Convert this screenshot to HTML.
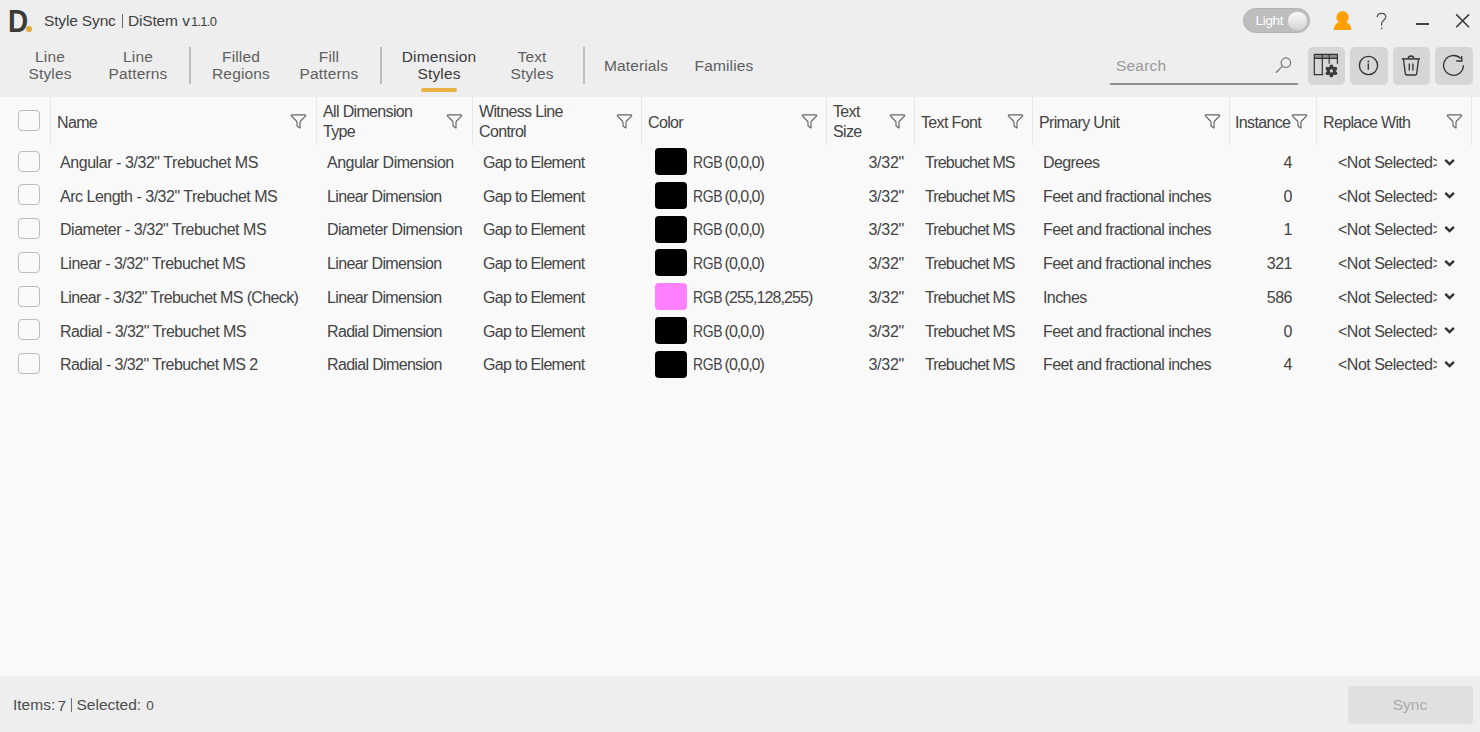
<!DOCTYPE html>
<html><head><meta charset="utf-8">
<style>
*{box-sizing:border-box;margin:0;padding:0}
html,body{width:1480px;height:732px;overflow:hidden;background:#eeeeee;font-family:"Liberation Sans",sans-serif;color:#333;position:relative}
.abs{position:absolute}
.t{position:absolute;white-space:nowrap;line-height:1}
#titlebar{position:absolute;left:0;top:0;width:1480px;height:40px;background:#eeeeee}
.logo{position:absolute;left:8px;top:5px;font-size:31px;line-height:31px;font-weight:bold;color:#3a3a36;transform:scale(0.9,1.04);transform-origin:0 0}
.logodot{position:absolute;left:26.3px;top:25.8px;width:5.8px;height:5.8px;border-radius:50%;background:#e8a838}
.title{top:12.6px;font-size:15.5px;color:#404040}
.toggle{position:absolute;left:1243px;top:8px;width:67px;height:25px;border-radius:13px;background:#bdbdbd;border:1px solid #b3b3b3}
.tglt{position:absolute;left:11.5px;top:4.6px;font-size:13.5px;line-height:13.5px;color:#fff;letter-spacing:-0.3px}
.knob{position:absolute;left:43.3px;top:1.5px;width:20.6px;height:20.6px;border-radius:50%;background:linear-gradient(#fafafa,#d4d4d4);border:1px solid #c4c4c4}
.help{left:1376px;top:11px;font-size:19px;color:#555}
#tabs{position:absolute;left:0;top:40px;width:1480px;height:56px;background:#eeeeee}
.tab{position:absolute;text-align:center;font-size:15.5px;line-height:17px;color:#5e5e5e;letter-spacing:0.15px;white-space:nowrap}
.tab.act{color:#3a3a3a}
.sep{position:absolute;top:47px;width:1.6px;height:37px;background:#bdbdbd}
.search{left:1116px;top:58px;font-size:15.5px;color:#9a9a9a;letter-spacing:0.2px}
.btn{position:absolute;top:47px;width:37px;height:38px;background:#d6d6d6;border-radius:5px}
#table{position:absolute;left:0;top:97px;width:1480px;height:579px;background:#f9f9f9}
.hsep{position:absolute;top:97px;width:1px;height:48px;background:#e6e6e6}
.ht{position:absolute;font-size:16px;line-height:20px;color:#444;white-space:nowrap;letter-spacing:-0.65px}
.cb{position:absolute;left:18px;width:22px;height:21px;border:1.5px solid #bcbcbc;border-radius:4px;background:#fafafa}
.cell{position:absolute;font-size:16px;line-height:18px;color:#444;white-space:nowrap;letter-spacing:-0.5px}
.rgb{letter-spacing:-1.3px}
.nm{letter-spacing:-0.65px}
.gp{letter-spacing:-0.7px}
.tf{letter-spacing:-0.85px}
.sw{position:absolute;left:655px;width:32px;height:27px;border-radius:4px;background:#000}
#footer{position:absolute;left:0;top:676px;width:1480px;height:56px;background:#eeeeee}
.items{top:696.5px;font-size:15.5px;color:#4c4c4c}
.syncbtn{position:absolute;left:1348px;top:686px;width:125px;height:38px;border-radius:4px;background:#e0e0e0;color:#aaa;font-size:15.5px;line-height:38px;text-align:center;padding-right:1px}

</style></head><body>
<div id="titlebar">
<div class="logo">D</div><div class="logodot"></div>
<div class="t title" style="left:44px;letter-spacing:-0.15px">Style Sync</div>
<div class="abs" style="left:122.2px;top:14px;width:1.3px;height:13.6px;background:#6a6a6a"></div>
<div class="t title" style="left:128px;letter-spacing:-0.2px">DiStem</div>
<div class="t title" style="left:182.2px">v</div>
<div class="t title" style="left:191px;top:15.2px;font-size:13px;letter-spacing:-0.75px">1.1.0</div>
<div class="toggle"><span class="tglt">Light</span><div class="knob"></div></div>
<svg class="abs" style="left:1331px;top:9px" width="24" height="24" viewBox="0 0 24 24">
<circle cx="11.5" cy="8.2" r="6.1" fill="#ffa000"/>
<path d="M2.7 21 C2.7 16 6.6 12.6 11.5 12.6 C16.4 12.6 20.3 16 20.3 21 Z" fill="#ffa000"/></svg>
<svg class="abs" style="left:1374px;top:11px" width="16" height="20" viewBox="0 0 16 20">
<path d="M3.3 6.2 C3.3 3.6 5.2 2.4 7.5 2.4 C9.9 2.4 11.8 3.8 11.8 6.1 C11.8 8.2 10.3 9 9.1 9.9 C8 10.7 7.6 11.4 7.6 12.8 V14.6" stroke="#555" stroke-width="1.25" fill="none"/>
<circle cx="7.6" cy="17.4" r="0.8" fill="#555"/></svg>
<div class="abs" style="left:1415.5px;top:23.3px;width:13.5px;height:1.5px;background:#444"></div>
<svg class="abs" style="left:1454px;top:13px" width="16" height="16" viewBox="0 0 16 16">
<path d="M2.2 1.4 L15.1 14.3 M15.1 1.4 L2.2 14.3" stroke="#3c3c3c" stroke-width="1.55" fill="none"/></svg>
</div>
<div id="tabs"></div>
<div class="tab" style="left:0px;top:47.5px;width:100px">Line<br>Styles</div>
<div class="tab" style="left:88px;top:47.5px;width:100px">Line<br>Patterns</div>
<div class="tab" style="left:191px;top:47.5px;width:100px">Filled<br>Regions</div>
<div class="tab" style="left:279px;top:47.5px;width:100px">Fill<br>Patterns</div>
<div class="tab act" style="left:389px;top:47.5px;width:100px">Dimension<br>Styles</div>
<div class="tab" style="left:482px;top:47.5px;width:100px">Text<br>Styles</div>
<div class="tab" style="left:586px;top:57px;width:100px">Materials</div>
<div class="tab" style="left:674px;top:57px;width:100px">Families</div>
<div class="sep" style="left:189px"></div>
<div class="sep" style="left:380px"></div>
<div class="sep" style="left:583px"></div>
<div class="abs" style="left:421px;top:88px;width:36px;height:4px;border-radius:2px;background:#e9b042"></div>
<div class="t search">Search</div>
<div class="abs" style="left:1110px;top:83.2px;width:188px;height:1.7px;background:#8f8f8f"></div>
<svg class="abs" style="left:1272px;top:55px" width="22" height="22" viewBox="0 0 22 22">
<circle cx="13.9" cy="7.7" r="4.75" stroke="#7c7c7c" stroke-width="1.2" fill="none"/>
<path d="M10.5 11.1 L4.3 17.3" stroke="#7c7c7c" stroke-width="1.25" fill="none" stroke-linecap="round"/></svg>
<div class="btn" style="left:1308px;width:37px"></div>
<div class="btn" style="left:1350px;width:38px"></div>
<div class="btn" style="left:1393px;width:37px"></div>
<div class="btn" style="left:1435px;width:38px"></div>
<svg class="abs" style="left:1308px;top:47px" width="37" height="38" viewBox="0 0 37 38">
<rect x="6.3" y="7.3" width="23.3" height="4.2" fill="#8e8e8e"/>
<path d="M6.3 7.3 H29.4 V16.8 M6.3 7.3 V27.6 H15.2 M14.3 7.3 V27.6 M21.2 7.3 V16.8 M6.3 11.4 H29.4" stroke="#333" stroke-width="1.2" fill="none"/>
<g transform="translate(23.4,23.9)" fill="#3a3a3a">
<circle r="4.4"/>
<circle cx="0" cy="-4.5" r="1.9"/><circle cx="3.9" cy="-2.25" r="1.9"/><circle cx="3.9" cy="2.25" r="1.9"/>
<circle cx="0" cy="4.5" r="1.9"/><circle cx="-3.9" cy="2.25" r="1.9"/><circle cx="-3.9" cy="-2.25" r="1.9"/>
<circle r="1.6" fill="#d6d6d6"/></g></svg>
<svg class="abs" style="left:1350px;top:47px" width="38" height="38" viewBox="0 0 38 38">
<circle cx="18.5" cy="18.5" r="9.1" stroke="#333" stroke-width="1.35" fill="none"/>
<circle cx="18.3" cy="14.5" r="0.9" fill="#333"/>
<path d="M18.3 16.6 V22.8" stroke="#333" stroke-width="1.35"/></svg>
<svg class="abs" style="left:1393px;top:47px" width="37" height="38" viewBox="0 0 37 38">
<path d="M8.8 11.9 H27" stroke="#333" stroke-width="1.5"/>
<path d="M15.2 11.5 Q15.4 9 18 9 Q20.6 9 20.8 11.5" stroke="#333" stroke-width="1.3" fill="none"/>
<path d="M10.5 12.3 L12.3 26.6 Q12.5 28 14 28 H22 Q23.5 28 23.7 26.6 L25.5 12.3" stroke="#333" stroke-width="1.3" fill="none" stroke-linejoin="round"/>
<path d="M16.3 16.6 V23.4 M19.9 16.6 V23.4" stroke="#333" stroke-width="1.3"/></svg>
<svg class="abs" style="left:1435px;top:47px" width="38" height="38" viewBox="0 0 38 38">
<path d="M28.4 18.3 A9.9 9.9 0 1 1 25.7 11.6" stroke="#333" stroke-width="1.3" fill="none"/>
<path d="M21.3 14 H27 L26.6 9" stroke="#333" stroke-width="1.3" fill="none" stroke-linejoin="round"/></svg>
<div id="table"></div>
<div class="hsep" style="left:50px"></div>
<div class="hsep" style="left:316px"></div>
<div class="hsep" style="left:472px"></div>
<div class="hsep" style="left:641px"></div>
<div class="hsep" style="left:826px"></div>
<div class="hsep" style="left:914px"></div>
<div class="hsep" style="left:1032px"></div>
<div class="hsep" style="left:1229px"></div>
<div class="hsep" style="left:1316px"></div>
<div class="hsep" style="left:1471px"></div>
<div class="cb" style="top:110px"></div>
<div class="ht" style="left:57px;top:112.5px">Name</div>
<svg class="abs" style="left:290px;top:113px" width="17" height="17" viewBox="0 0 17 17">
<path d="M2.2 1.9 H14.8 Q16.2 1.9 15.4 3.2 L10.6 8 Q10 8.6 10 9.6 V14.9 L7 12.9 V9.6 Q7 8.6 6.4 8 L1.6 3.2 Q0.8 1.9 2.2 1.9 Z" stroke="#666" stroke-width="1.15" fill="none" stroke-linejoin="round"/></svg>
<div class="ht" style="left:323px;top:102px">All Dimension<br>Type</div>
<svg class="abs" style="left:446px;top:113px" width="17" height="17" viewBox="0 0 17 17">
<path d="M2.2 1.9 H14.8 Q16.2 1.9 15.4 3.2 L10.6 8 Q10 8.6 10 9.6 V14.9 L7 12.9 V9.6 Q7 8.6 6.4 8 L1.6 3.2 Q0.8 1.9 2.2 1.9 Z" stroke="#666" stroke-width="1.15" fill="none" stroke-linejoin="round"/></svg>
<div class="ht" style="left:479px;top:102px">Witness Line<br>Control</div>
<svg class="abs" style="left:616px;top:113px" width="17" height="17" viewBox="0 0 17 17">
<path d="M2.2 1.9 H14.8 Q16.2 1.9 15.4 3.2 L10.6 8 Q10 8.6 10 9.6 V14.9 L7 12.9 V9.6 Q7 8.6 6.4 8 L1.6 3.2 Q0.8 1.9 2.2 1.9 Z" stroke="#666" stroke-width="1.15" fill="none" stroke-linejoin="round"/></svg>
<div class="ht" style="left:648px;top:112.5px">Color</div>
<svg class="abs" style="left:801px;top:113px" width="17" height="17" viewBox="0 0 17 17">
<path d="M2.2 1.9 H14.8 Q16.2 1.9 15.4 3.2 L10.6 8 Q10 8.6 10 9.6 V14.9 L7 12.9 V9.6 Q7 8.6 6.4 8 L1.6 3.2 Q0.8 1.9 2.2 1.9 Z" stroke="#666" stroke-width="1.15" fill="none" stroke-linejoin="round"/></svg>
<div class="ht" style="left:833px;top:102px">Text<br>Size</div>
<svg class="abs" style="left:889px;top:113px" width="17" height="17" viewBox="0 0 17 17">
<path d="M2.2 1.9 H14.8 Q16.2 1.9 15.4 3.2 L10.6 8 Q10 8.6 10 9.6 V14.9 L7 12.9 V9.6 Q7 8.6 6.4 8 L1.6 3.2 Q0.8 1.9 2.2 1.9 Z" stroke="#666" stroke-width="1.15" fill="none" stroke-linejoin="round"/></svg>
<div class="ht" style="left:921px;top:112.5px">Text Font</div>
<svg class="abs" style="left:1007px;top:113px" width="17" height="17" viewBox="0 0 17 17">
<path d="M2.2 1.9 H14.8 Q16.2 1.9 15.4 3.2 L10.6 8 Q10 8.6 10 9.6 V14.9 L7 12.9 V9.6 Q7 8.6 6.4 8 L1.6 3.2 Q0.8 1.9 2.2 1.9 Z" stroke="#666" stroke-width="1.15" fill="none" stroke-linejoin="round"/></svg>
<div class="ht" style="left:1039px;top:112.5px">Primary Unit</div>
<svg class="abs" style="left:1204px;top:113px" width="17" height="17" viewBox="0 0 17 17">
<path d="M2.2 1.9 H14.8 Q16.2 1.9 15.4 3.2 L10.6 8 Q10 8.6 10 9.6 V14.9 L7 12.9 V9.6 Q7 8.6 6.4 8 L1.6 3.2 Q0.8 1.9 2.2 1.9 Z" stroke="#666" stroke-width="1.15" fill="none" stroke-linejoin="round"/></svg>
<div class="ht" style="left:1235px;top:112.5px">Instance</div>
<svg class="abs" style="left:1291px;top:113px" width="17" height="17" viewBox="0 0 17 17">
<path d="M2.2 1.9 H14.8 Q16.2 1.9 15.4 3.2 L10.6 8 Q10 8.6 10 9.6 V14.9 L7 12.9 V9.6 Q7 8.6 6.4 8 L1.6 3.2 Q0.8 1.9 2.2 1.9 Z" stroke="#666" stroke-width="1.15" fill="none" stroke-linejoin="round"/></svg>
<div class="ht" style="left:1323px;top:112.5px">Replace With</div>
<svg class="abs" style="left:1446px;top:113px" width="17" height="17" viewBox="0 0 17 17">
<path d="M2.2 1.9 H14.8 Q16.2 1.9 15.4 3.2 L10.6 8 Q10 8.6 10 9.6 V14.9 L7 12.9 V9.6 Q7 8.6 6.4 8 L1.6 3.2 Q0.8 1.9 2.2 1.9 Z" stroke="#666" stroke-width="1.15" fill="none" stroke-linejoin="round"/></svg>
<div class="cb" style="top:150.75px"></div>
<div class="cell nm" style="left:60px;top:154.05px;letter-spacing:-0.44px">Angular - 3/32" Trebuchet MS</div>
<div class="cell" style="left:327px;top:154.05px;letter-spacing:-0.5px">Angular Dimension</div>
<div class="cell gp" style="left:483px;top:154.05px">Gap to Element</div>
<div class="sw" style="top:148.35px;background:#000"></div>
<div class="cell" style="left:693px;top:154.05px;letter-spacing:-0.3px;transform:scaleX(0.87);transform-origin:0 0">RGB</div>
<div class="cell" style="left:724.6px;top:154.05px;letter-spacing:-1.0px">(0,0,0)</div>
<div class="cell" style="left:804px;width:100px;text-align:right;top:154.05px;letter-spacing:-0.25px">3/32"</div>
<div class="cell tf" style="left:925px;top:154.05px">Trebuchet MS</div>
<div class="cell" style="left:1043px;top:154.05px;letter-spacing:-0.59px">Degrees</div>
<div class="cell" style="left:1192px;width:100px;text-align:right;top:154.05px">4</div>
<div class="cell ns" style="left:1338px;width:99px;overflow:hidden;top:154.05px">&lt;Not Selected&gt;</div>
<svg class="abs" style="left:1443px;top:156.65px" width="13" height="10" viewBox="0 0 13 10">
<path d="M2.3 2.9 L6.6 7.1 L10.9 2.9" stroke="#333" stroke-width="2.5" fill="none"/></svg>
<div class="cb" style="top:184.45px"></div>
<div class="cell nm" style="left:60px;top:187.75px;letter-spacing:-0.49px">Arc Length - 3/32" Trebuchet MS</div>
<div class="cell" style="left:327px;top:187.75px;letter-spacing:-0.63px">Linear Dimension</div>
<div class="cell gp" style="left:483px;top:187.75px">Gap to Element</div>
<div class="sw" style="top:182.05px;background:#000"></div>
<div class="cell" style="left:693px;top:187.75px;letter-spacing:-0.3px;transform:scaleX(0.87);transform-origin:0 0">RGB</div>
<div class="cell" style="left:724.6px;top:187.75px;letter-spacing:-1.0px">(0,0,0)</div>
<div class="cell" style="left:804px;width:100px;text-align:right;top:187.75px;letter-spacing:-0.25px">3/32"</div>
<div class="cell tf" style="left:925px;top:187.75px">Trebuchet MS</div>
<div class="cell" style="left:1043px;top:187.75px;letter-spacing:-0.59px">Feet and fractional inches</div>
<div class="cell" style="left:1192px;width:100px;text-align:right;top:187.75px">0</div>
<div class="cell ns" style="left:1338px;width:99px;overflow:hidden;top:187.75px">&lt;Not Selected&gt;</div>
<svg class="abs" style="left:1443px;top:190.35px" width="13" height="10" viewBox="0 0 13 10">
<path d="M2.3 2.9 L6.6 7.1 L10.9 2.9" stroke="#333" stroke-width="2.5" fill="none"/></svg>
<div class="cb" style="top:218.15px"></div>
<div class="cell nm" style="left:60px;top:221.45px;letter-spacing:-0.48px">Diameter - 3/32" Trebuchet MS</div>
<div class="cell" style="left:327px;top:221.45px;letter-spacing:-0.55px">Diameter Dimension</div>
<div class="cell gp" style="left:483px;top:221.45px">Gap to Element</div>
<div class="sw" style="top:215.75px;background:#000"></div>
<div class="cell" style="left:693px;top:221.45px;letter-spacing:-0.3px;transform:scaleX(0.87);transform-origin:0 0">RGB</div>
<div class="cell" style="left:724.6px;top:221.45px;letter-spacing:-1.0px">(0,0,0)</div>
<div class="cell" style="left:804px;width:100px;text-align:right;top:221.45px;letter-spacing:-0.25px">3/32"</div>
<div class="cell tf" style="left:925px;top:221.45px">Trebuchet MS</div>
<div class="cell" style="left:1043px;top:221.45px;letter-spacing:-0.59px">Feet and fractional inches</div>
<div class="cell" style="left:1192px;width:100px;text-align:right;top:221.45px">1</div>
<div class="cell ns" style="left:1338px;width:99px;overflow:hidden;top:221.45px">&lt;Not Selected&gt;</div>
<svg class="abs" style="left:1443px;top:224.05px" width="13" height="10" viewBox="0 0 13 10">
<path d="M2.3 2.9 L6.6 7.1 L10.9 2.9" stroke="#333" stroke-width="2.5" fill="none"/></svg>
<div class="cb" style="top:251.85px"></div>
<div class="cell nm" style="left:60px;top:255.15px;letter-spacing:-0.53px">Linear - 3/32" Trebuchet MS</div>
<div class="cell" style="left:327px;top:255.15px;letter-spacing:-0.63px">Linear Dimension</div>
<div class="cell gp" style="left:483px;top:255.15px">Gap to Element</div>
<div class="sw" style="top:249.45px;background:#000"></div>
<div class="cell" style="left:693px;top:255.15px;letter-spacing:-0.3px;transform:scaleX(0.87);transform-origin:0 0">RGB</div>
<div class="cell" style="left:724.6px;top:255.15px;letter-spacing:-1.0px">(0,0,0)</div>
<div class="cell" style="left:804px;width:100px;text-align:right;top:255.15px;letter-spacing:-0.25px">3/32"</div>
<div class="cell tf" style="left:925px;top:255.15px">Trebuchet MS</div>
<div class="cell" style="left:1043px;top:255.15px;letter-spacing:-0.59px">Feet and fractional inches</div>
<div class="cell" style="left:1192px;width:100px;text-align:right;top:255.15px">321</div>
<div class="cell ns" style="left:1338px;width:99px;overflow:hidden;top:255.15px">&lt;Not Selected&gt;</div>
<svg class="abs" style="left:1443px;top:257.75px" width="13" height="10" viewBox="0 0 13 10">
<path d="M2.3 2.9 L6.6 7.1 L10.9 2.9" stroke="#333" stroke-width="2.5" fill="none"/></svg>
<div class="cb" style="top:285.55px"></div>
<div class="cell nm" style="left:60px;top:288.85px;letter-spacing:-0.62px">Linear - 3/32" Trebuchet MS (Check)</div>
<div class="cell" style="left:327px;top:288.85px;letter-spacing:-0.63px">Linear Dimension</div>
<div class="cell gp" style="left:483px;top:288.85px">Gap to Element</div>
<div class="sw" style="top:283.15px;background:#ff80ff"></div>
<div class="cell" style="left:693px;top:288.85px;letter-spacing:-0.3px;transform:scaleX(0.87);transform-origin:0 0">RGB</div>
<div class="cell" style="left:724.6px;top:288.85px;letter-spacing:-0.9px">(255,128,255)</div>
<div class="cell" style="left:804px;width:100px;text-align:right;top:288.85px;letter-spacing:-0.25px">3/32"</div>
<div class="cell tf" style="left:925px;top:288.85px">Trebuchet MS</div>
<div class="cell" style="left:1043px;top:288.85px;letter-spacing:-0.59px">Inches</div>
<div class="cell" style="left:1192px;width:100px;text-align:right;top:288.85px">586</div>
<div class="cell ns" style="left:1338px;width:99px;overflow:hidden;top:288.85px">&lt;Not Selected&gt;</div>
<svg class="abs" style="left:1443px;top:291.45px" width="13" height="10" viewBox="0 0 13 10">
<path d="M2.3 2.9 L6.6 7.1 L10.9 2.9" stroke="#333" stroke-width="2.5" fill="none"/></svg>
<div class="cb" style="top:319.25px"></div>
<div class="cell nm" style="left:60px;top:322.55px;letter-spacing:-0.54px">Radial - 3/32" Trebuchet MS</div>
<div class="cell" style="left:327px;top:322.55px;letter-spacing:-0.66px">Radial Dimension</div>
<div class="cell gp" style="left:483px;top:322.55px">Gap to Element</div>
<div class="sw" style="top:316.85px;background:#000"></div>
<div class="cell" style="left:693px;top:322.55px;letter-spacing:-0.3px;transform:scaleX(0.87);transform-origin:0 0">RGB</div>
<div class="cell" style="left:724.6px;top:322.55px;letter-spacing:-1.0px">(0,0,0)</div>
<div class="cell" style="left:804px;width:100px;text-align:right;top:322.55px;letter-spacing:-0.25px">3/32"</div>
<div class="cell tf" style="left:925px;top:322.55px">Trebuchet MS</div>
<div class="cell" style="left:1043px;top:322.55px;letter-spacing:-0.59px">Feet and fractional inches</div>
<div class="cell" style="left:1192px;width:100px;text-align:right;top:322.55px">0</div>
<div class="cell ns" style="left:1338px;width:99px;overflow:hidden;top:322.55px">&lt;Not Selected&gt;</div>
<svg class="abs" style="left:1443px;top:325.15px" width="13" height="10" viewBox="0 0 13 10">
<path d="M2.3 2.9 L6.6 7.1 L10.9 2.9" stroke="#333" stroke-width="2.5" fill="none"/></svg>
<div class="cb" style="top:352.95px"></div>
<div class="cell nm" style="left:60px;top:356.25px;letter-spacing:-0.56px">Radial - 3/32" Trebuchet MS 2</div>
<div class="cell" style="left:327px;top:356.25px;letter-spacing:-0.66px">Radial Dimension</div>
<div class="cell gp" style="left:483px;top:356.25px">Gap to Element</div>
<div class="sw" style="top:350.55px;background:#000"></div>
<div class="cell" style="left:693px;top:356.25px;letter-spacing:-0.3px;transform:scaleX(0.87);transform-origin:0 0">RGB</div>
<div class="cell" style="left:724.6px;top:356.25px;letter-spacing:-1.0px">(0,0,0)</div>
<div class="cell" style="left:804px;width:100px;text-align:right;top:356.25px;letter-spacing:-0.25px">3/32"</div>
<div class="cell tf" style="left:925px;top:356.25px">Trebuchet MS</div>
<div class="cell" style="left:1043px;top:356.25px;letter-spacing:-0.59px">Feet and fractional inches</div>
<div class="cell" style="left:1192px;width:100px;text-align:right;top:356.25px">4</div>
<div class="cell ns" style="left:1338px;width:99px;overflow:hidden;top:356.25px">&lt;Not Selected&gt;</div>
<svg class="abs" style="left:1443px;top:358.85px" width="13" height="10" viewBox="0 0 13 10">
<path d="M2.3 2.9 L6.6 7.1 L10.9 2.9" stroke="#333" stroke-width="2.5" fill="none"/></svg>
<div id="footer"></div>
<div class="t items" style="left:13px">Items:</div>
<div class="t items" style="left:57.6px;top:698.4px;font-size:15.5px">7</div>
<div class="abs" style="left:71px;top:697.8px;width:1.3px;height:13.8px;background:#707070"></div>
<div class="t items" style="left:76.5px">Selected:</div>
<div class="t items" style="left:146.2px;top:698.6px;font-size:13.5px">0</div>
<div class="syncbtn">Sync</div>
</body></html>
